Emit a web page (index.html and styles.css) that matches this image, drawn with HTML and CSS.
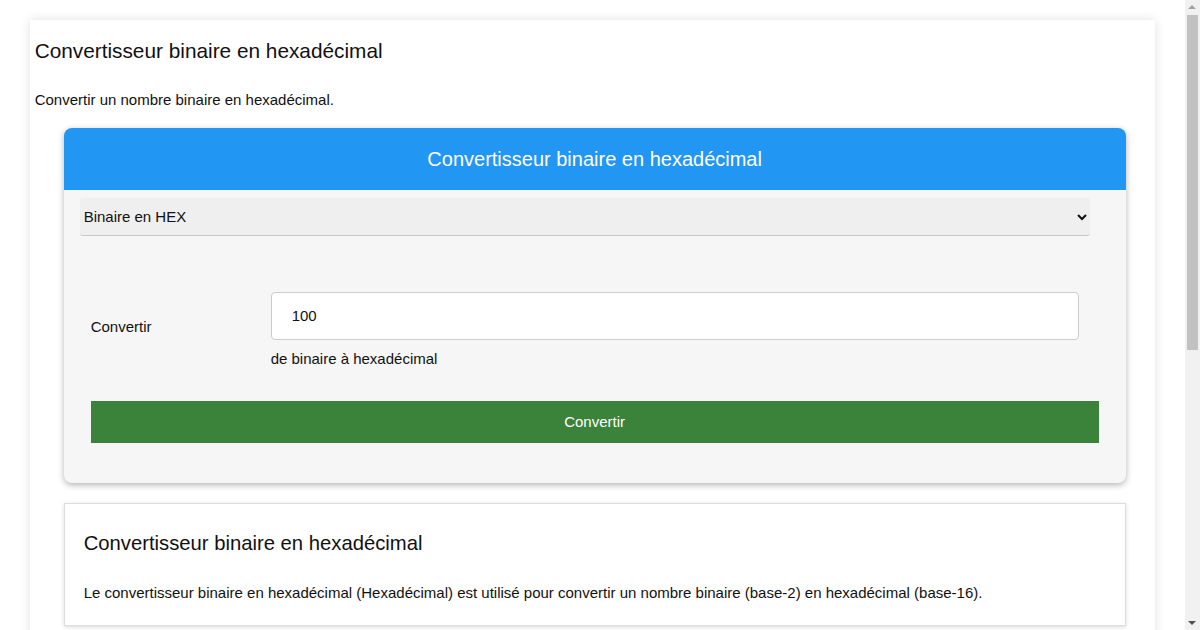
FILE: index.html
```html
<!DOCTYPE html>
<html lang="fr">
<head>
<meta charset="UTF-8" />
<meta name="viewport" content="width=device-width, initial-scale=1" />
<title>Convertisseur binaire en hexadécimal</title>
<link rel="stylesheet" href="styles.css">
</head>
<body>

<div class="page">
  <h1 class="page-title">Convertisseur binaire en hexadécimal</h1>
  <p class="page-lead">Convertir un nombre binaire en hexadécimal.</p>

  <!-- Converter card -->
  <div class="converter">
    <div class="converter-head">Convertisseur binaire en hexadécimal</div>
    <div class="converter-body">
      <select class="mode-select" aria-label="Type de conversion">
        <option>Binaire en HEX</option>
        <option>HEX en binaire</option>
      </select>

      <form class="convert-form" onsubmit="convert(event)">
        <label class="convert-label" for="value-input">Convertir</label>
        <div class="convert-field">
          <input type="text" id="value-input" class="convert-input" value="100" />
          <div class="convert-hint">de binaire à hexadécimal</div>
        </div>
        <button type="submit" class="convert-button">Convertir</button>
      </form>
    </div>
  </div>

  <!-- Description -->
  <div class="info-card">
    <h2>Convertisseur binaire en hexadécimal</h2>
    <p>Le convertisseur binaire en hexadécimal (Hexadécimal) est utilisé pour convertir un nombre binaire (base-2) en hexadécimal (base-16).</p>
  </div>

  <div class="info-card">
    <h2>Comment convertir un nombre binaire en hexadécimal</h2>
    <p>Regroupez les chiffres binaires par quatre en partant de la droite, puis remplacez chaque groupe par le chiffre hexadécimal correspondant.</p>
    <p>Exemple : 1010 1111 = AF</p>
  </div>

  <div class="info-card">
    <h2>Table de conversion</h2>
    <p>0000 = 0, 0001 = 1, 0010 = 2, 0011 = 3, 0100 = 4, 0101 = 5, 0110 = 6, 0111 = 7</p>
    <p>1000 = 8, 1001 = 9, 1010 = A, 1011 = B, 1100 = C, 1101 = D, 1110 = E, 1111 = F</p>
  </div>
</div>

<!-- Window scrollbar -->
<div class="scrollbar" aria-hidden="true">
  <div class="scroll-arrow up"></div>
  <div class="scroll-thumb"></div>
  <div class="scroll-arrow down"></div>
</div>

<script>
  function convert(event) {
    event.preventDefault();
    const input = document.getElementById('value-input');
    const n = parseInt(input.value, 2);
    if (isNaN(n)) return;
    document.querySelector('.convert-hint').textContent = n.toString(16).toUpperCase();
  }
</script>

</body>
</html>
```

FILE: styles.css
```css
body {
  margin: 0;
  padding-right: 15px;
  background: #fff;
  font-family: 'Liberation Sans', Arial, sans-serif;
  color: #111;
}
.page {
  width: 95%;
  margin: 20px auto 0;
  padding: 18px 5px 40px;
  box-sizing: border-box;
  background: #fff;
  box-shadow: 0 0 10px rgba(0,0,0,0.12);
}
.page-title {
  margin: 0;
  font-size: 20.8px;
  font-weight: 400;
  line-height: 25px;
}
.page-lead {
  margin: 28px 0 0;
  font-size: 15px;
  line-height: 17px;
}
.converter {
  width: 1062px;
  margin: 20px 0 0 29px;
  border-radius: 8px;
  overflow: hidden;
  background: #f6f6f6;
  box-shadow: 0 2px 6px rgba(0,0,0,0.3);
}
.converter-head {
  height: 62px;
  background: #2196f3;
  color: #fff;
  font-size: 20px;
  display: flex;
  align-items: center;
  justify-content: center;
}
.converter-body {
  padding: 8px 27px 40px 16px;
}
.mode-select {
  width: 1010px;
  height: 38px;
  padding: 0;
  font-family: 'Liberation Sans', Arial, sans-serif;
  font-size: 15px;
  color: #111;
  background: #efefef;
  border: none;
  border-bottom: 1px solid #c8c8c8;
  border-radius: 3px;
}
.convert-form {
  display: grid;
  grid-template-columns: 180px 1fr;
  margin: 56px 0 0 11px;
}
.convert-label {
  align-self: center;
  font-size: 15px;
  padding-bottom: 6px;
}
.convert-field {
  padding-right: 20px;
}
.convert-input {
  display: block;
  width: 100%;
  height: 48px;
  box-sizing: border-box;
  padding: 0 20px 2px;
  font-family: 'Liberation Sans', Arial, sans-serif;
  font-size: 15px;
  color: #111;
  background: #fff;
  border: 1px solid #ccc;
  border-radius: 4px;
}
.convert-input:focus {
  outline: none;
  border-color: #999;
}
.convert-hint {
  margin-top: 10px;
  font-size: 15px;
  line-height: 17px;
}
.convert-button {
  grid-column: 1 / span 2;
  margin-top: 34px;
  height: 42px;
  padding-bottom: 2px;
  background: #3b823a;
  color: #fff;
  border: none;
  font-family: 'Liberation Sans', Arial, sans-serif;
  font-size: 15px;
  cursor: pointer;
}
.info-card {
  width: 1062px;
  margin: 20px 0 0 29px;
  box-sizing: border-box;
  padding: 28px 19px 24px;
  background: #fff;
  border: 1px solid #ddd;
  box-shadow: 0 1px 4px rgba(0,0,0,0.15);
}
.info-card h2 {
  margin: 0;
  font-size: 20.25px;
  font-weight: 400;
  line-height: 23px;
}
.info-card p {
  margin: 29px 0 0;
  font-size: 15px;
  line-height: 17px;
}
.info-card p + p {
  margin-top: 12px;
}
.scrollbar {
  position: fixed;
  top: 0;
  right: 0;
  bottom: 0;
  width: 15px;
  background: #f1f1f1;
}
.scroll-thumb {
  position: absolute;
  top: 15px;
  left: 2px;
  width: 11px;
  height: 335px;
  background: #c1c1c1;
}
.scroll-arrow {
  position: absolute;
  left: 3px;
  width: 0;
  height: 0;
  border-left: 4.5px solid transparent;
  border-right: 4.5px solid transparent;
}
.scroll-arrow.up {
  top: 5px;
  border-bottom: 4.5px solid #a3a3a3;
}
.scroll-arrow.down {
  bottom: 5px;
  border-top: 4.5px solid #505050;
}
```
